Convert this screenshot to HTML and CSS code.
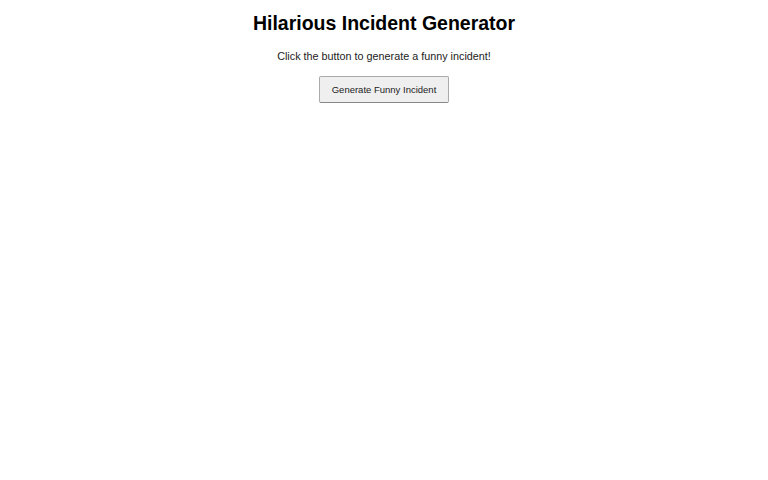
FILE: index.html
```html
<!DOCTYPE html>
<html lang="en">
<head>
  <meta charset="UTF-8">
  <title>Hilarious Incident Generator</title>
  <link rel="stylesheet" href="styles.css">
</head>
<body>
  <div class="container">
    <h1>Hilarious Incident Generator</h1>
    <p>Click the button to generate a funny incident!</p>
    <button id="generate-btn" class="btn">Generate Funny Incident</button>
    <div id="incident" class="incident"></div>
  </div>
</body>
</html>
```

FILE: styles.css
```css
body {
    margin: 0;
    padding: 0;
    font-family: "Liberation Sans", Arial, sans-serif;
    color: #000;
    background: #fff;
}
.container {
    text-align: center;
    padding-top: 12px;
}
h1 {
    font-size: 19.5px;
    margin: 0 0 15px;
}
p {
    font-size: 10.8px;
    color: #222;
    margin: 0 0 14px;
}
.btn {
    font-family: "Liberation Sans", Arial, sans-serif;
    font-size: 9.5px;
    padding: 7px 12px;
    background-color: #efefef;
    border: 1px solid #aaa;
    border-bottom-color: #888;
    border-radius: 2px;
    color: #222;
}
```
